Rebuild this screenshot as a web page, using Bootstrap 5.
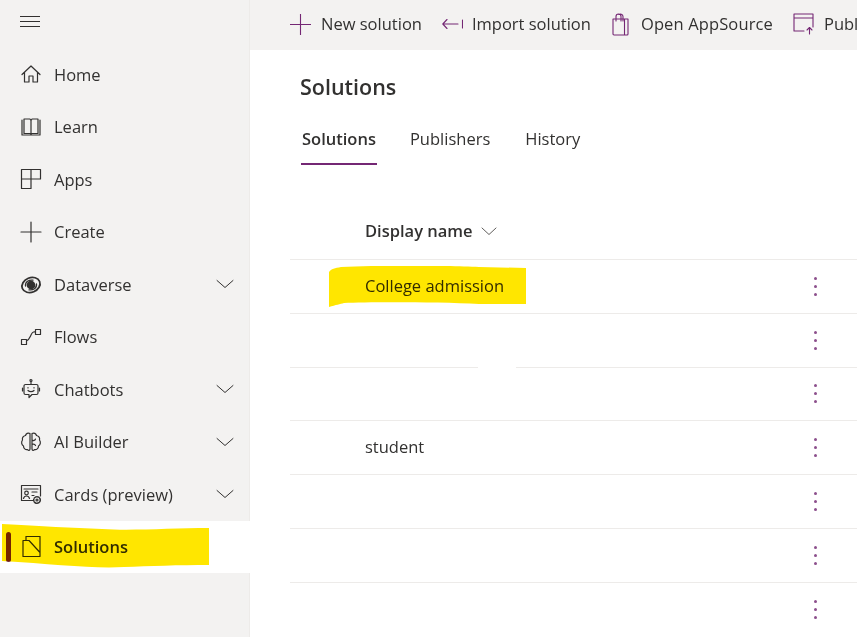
<!DOCTYPE html>
<html lang="en">
<head>
    <meta charset="UTF-8">
    <meta name="viewport" content="width=device-width, initial-scale=1.0">
    <title>Solutions</title>
    <link href="https://cdn.jsdelivr.net/npm/bootstrap@5.3.0/dist/css/bootstrap.min.css" rel="stylesheet">
    <style>
        html, body { height: 100%; overflow: hidden; }
        body { font-family: "Open Sans", "Liberation Sans", sans-serif; color: #323130; background: #fff; font-size: 16.5px; }
        svg { display: block; flex: none; fill: none; stroke-linecap: round; stroke-linejoin: round; }
        .app { height: 637px; }
        .sidebar { width: 250px; flex: none; background: #f3f2f1; border-right: 1px solid #edebe9; }
        .hamburger { height: 48px; padding: 15px 0 0 20px; }
        .side-item { height: 52.5px; padding: 2px 15px 0 20px; position: relative; }
        .side-item svg.icon { width: 22px; height: 22px; stroke: #323130; stroke-width: 1.2; margin: -2px 12px 0 0; }
        .side-item .chev { margin-left: auto; margin-top: -2px; }
        .side-item.active { background: #fff; margin-right: -1px; font-weight: 600; }
        .active-bar { position: absolute; left: 6px; top: 11px; width: 5px; height: 30px; border-radius: 3px; background: #742774; z-index: 2; }
        .marker { position: absolute; mix-blend-mode: multiply; z-index: 3; pointer-events: none; fill: #ffe600; stroke: none; }
        .commandbar { height: 50px; background: #f3f2f1; padding: 0 0 2px 40px; white-space: nowrap; overflow: hidden; }
        .cmd { margin-right: 20px; }
        .cmd svg { stroke: #742774; stroke-width: 1.1; margin-right: 10px; }
        .cmd-appsource { margin-left: 1px; letter-spacing: .13px; }
        .page-title { font-size: 21.5px; font-weight: 600; margin: 0; padding: 23px 0 0 50px; line-height: 27px; }
        .tabs { padding: 22px 0 0 51px; height: 90px; }
        .tabs .tab { padding: 0 2px; line-height: 34px; margin-right: 31px; }
        .tabs .tab.active { font-weight: 600; border-bottom: 2px solid #742774; height: 43px; padding: 0 1px; }
        .grid-head { margin-left: 40px; height: 70px; padding: 14px 0 0 75px; font-weight: 600; border-bottom: 1px solid #edebe9; }
        .grid-row { margin-left: 40px; height: 53.75px; padding-left: 75px; padding-right: 40.5px; border-bottom: 1px solid #edebe9; position: relative; }
        .dots { margin-left: auto; display: flex; flex-direction: column; gap: 5px; }
        .dots i { display: block; width: 3px; height: 3px; border-radius: 50%; background: #8c4f8c; }
        .erased { position: absolute; left: 188px; bottom: -1px; width: 38px; height: 1px; background: #fff; }
    </style>
</head>
<body>
<div class="app d-flex">
    <!-- left nav -->
    <nav class="sidebar">
        <div class="hamburger">
            <svg width="20" height="14" style="stroke:#323130;stroke-width:1"><path d="M0 1.500h20M0 6.500h20M0 11.500h20"/></svg>
        </div>
        <div class="side-item d-flex align-items-center">
            <svg class="icon" viewBox="0 0 22 22"><path d="M2 11.500 11 3l9 8.500M4.500 9.500V19h4.500v-6h4v6h4.500V9.500"/></svg>Home
        </div>
        <div class="side-item d-flex align-items-center">
            <svg class="icon" viewBox="0 0 22 22"><path d="M2 4v15h18V4M4 3h6l1 1.500V18l-1-.5H4zM18 3h-6l-1 1.500V18l1-.5h6z"/></svg>Learn
        </div>
        <div class="side-item d-flex align-items-center">
            <svg class="icon" viewBox="0 0 22 22"><path d="M1.500 1.500h19v9.500H11v9.500H1.500zM11 1.500V11H1.500"/></svg>Apps
        </div>
        <div class="side-item d-flex align-items-center">
            <svg class="icon" viewBox="0 0 22 22"><path d="M11 1v20M1 11h20"/></svg>Create
        </div>
        <div class="side-item d-flex align-items-center">
            <svg class="icon" viewBox="0 0 22 22"><ellipse cx="11" cy="12" rx="9.300" ry="7.300" transform="rotate(-22 11 12)" stroke-width="1.800"/><circle cx="11" cy="12" r="4.300" fill="#323130" stroke="none"/><path d="M5.500 13C5 9 9 6.500 13 7.200M16.500 11c.5 4-3.500 6.500-7.500 5.800" stroke-width="1.300"/></svg>Dataverse
            <svg class="chev" width="18" height="10" style="stroke:#323130;stroke-width:1"><path d="M1 1.500l8 7 8-7"/></svg>
        </div>
        <div class="side-item d-flex align-items-center">
            <svg class="icon" viewBox="0 0 22 22"><path d="M1.500 13.500h5v5h-5zM15.500 3.500h5v5h-5zM6.500 15c2.500-1 3-3 4.500-6s2-3 4.500-3.500"/></svg>Flows
        </div>
        <div class="side-item d-flex align-items-center">
            <svg class="icon" viewBox="0 0 22 22"><path d="M5.500 6.500h11a1.500 1.500 0 0 1 1.500 1.500v7a1.500 1.500 0 0 1-1.500 1.500H12l-3 3v-3H5.500A1.500 1.500 0 0 1 4 15V8a1.500 1.500 0 0 1 1.500-1.500zM11 6.500V3.500M2.500 10v3M19.500 10v3M8 12.500c1.500 1.500 4.500 1.500 6 0"/><circle cx="11" cy="2.500" r="1"/><path d="M8 9.500v.5M14 9.500v.5"/></svg>Chatbots
            <svg class="chev" width="18" height="10" style="stroke:#323130;stroke-width:1"><path d="M1 1.500l8 7 8-7"/></svg>
        </div>
        <div class="side-item d-flex align-items-center">
            <svg class="icon" viewBox="0 0 22 22"><path d="M10 2.500C8 1.500 6 2.500 5.500 4.500 3 5 2 7 2.500 9 1 11 1.500 14 3.500 15c0 2.500 2 4 4 3.500 1 1.500 2.500 1 2.500-.5zM12 2.500c2-1 4 0 4.500 2 2.500.5 3.500 2.500 3 4.500 1.500 2 1 5-1 6 0 2.500-2 4-4 3.500-1 1.500-2.500 1-2.500-.5zM12 9c1.500 1 3 .5 3.500-1M12 13.500c1.500-.5 3 0 3.500 1"/></svg>AI Builder
            <svg class="chev" width="18" height="10" style="stroke:#323130;stroke-width:1"><path d="M1 1.500l8 7 8-7"/></svg>
        </div>
        <div class="side-item d-flex align-items-center">
            <svg class="icon" viewBox="0 0 22 22"><path d="M13 17.500H1.500v-15h19V13M4 6h14"/><circle cx="6.500" cy="10" r="1.800"/><path d="M3.500 15.500c.5-2 1.500-2.500 3-2.500s2.500.5 3 2.500M12 9h5M12 12.500h2"/><circle cx="17" cy="17" r="3.300" stroke-width="1.500" stroke-dasharray="2 1"/><circle cx="17" cy="17" r="1"/></svg>Cards (preview)
            <svg class="chev" width="18" height="10" style="stroke:#323130;stroke-width:1"><path d="M1 1.500l8 7 8-7"/></svg>
        </div>
        <div class="side-item active d-flex align-items-center">
            <span class="active-bar"></span>
            <svg class="icon" viewBox="0 0 22 22"><path d="M6 4.500V.5H20V20M3 4.500H9L20 16.500M3 4.500V20.500H20"/></svg>Solutions
            <svg class="marker" style="left:2px;top:3px" width="207" height="45" viewBox="0 0 207 45"><path d="M0 0C40 2 70 4 100 5c30 2 70-1 107-1v37c-30 0-60 1-85 2-30 2-70-3-122-6z"/></svg>
        </div>
    </nav>

    <!-- main area -->
    <main class="flex-grow-1 overflow-hidden">
        <div class="commandbar d-flex align-items-center">
            <div class="cmd d-flex align-items-center">
                <svg width="21" height="21" viewBox="0 0 21 21"><path d="M10.500 0v21M0 10.500h21"/></svg>New solution
            </div>
            <div class="cmd d-flex align-items-center">
                <svg width="21" height="12" viewBox="0 0 21 12" style="margin-right:9px"><path d="M5 1.500.8 6 5 10.500M1 6h15M20.500 2v8"/></svg>Import solution
            </div>
            <div class="cmd cmd-appsource d-flex align-items-center">
                <svg width="17" height="23" viewBox="0 0 17 23" style="margin-right:12px"><path d="M1 6h11.500v16H2a1 1 0 0 1-1-1zM12.500 6H16v15a1 1 0 0 1-1 1h-2.500M4 8V3.500a2.500 2.500 0 0 1 5 0V8M7 1.500c1-1 4-.5 4 2V8"/></svg>Open AppSource
            </div>
            <div class="cmd d-flex align-items-center">
                <svg width="21" height="22" viewBox="0 0 21 22"><path d="M11 18H1V1h19v13M1 5h19M16.500 21v-6M14 17l2.500-2.500L19 17"/></svg>Publ
            </div>
        </div>

        <h1 class="page-title">Solutions</h1>
        <div class="tabs d-flex align-items-start">
            <div class="tab active">Solutions</div>
            <div class="tab">Publishers</div>
            <div class="tab">History</div>
        </div>

        <div class="grid-head d-flex align-items-center">
            Display name
            <svg class="ms-2" width="16" height="9" style="stroke:#605e5c;stroke-width:1"><path d="M1 1l7 6.500L15 1"/></svg>
        </div>
        <div class="grid-row d-flex align-items-center">
            <svg class="marker" style="left:39px;top:6px" width="197" height="43" viewBox="0 0 197 43"><path d="M12 1C50-1 120-.500 150 1l47 1v36H150c-40-2-110-2-135-1-4 1-8 2-15 4V6c2-3 6-4 12-5z"/></svg>
            College admission
            <div class="dots"><i></i><i></i><i></i></div>
        </div>
        <div class="grid-row d-flex align-items-center">
            <span class="erased"></span>
            <div class="dots"><i></i><i></i><i></i></div>
        </div>
        <div class="grid-row d-flex align-items-center">
            <div class="dots"><i></i><i></i><i></i></div>
        </div>
        <div class="grid-row d-flex align-items-center">
            student
            <div class="dots"><i></i><i></i><i></i></div>
        </div>
        <div class="grid-row d-flex align-items-center">
            <div class="dots"><i></i><i></i><i></i></div>
        </div>
        <div class="grid-row d-flex align-items-center">
            <div class="dots"><i></i><i></i><i></i></div>
        </div>
        <div class="grid-row d-flex align-items-center" style="border-bottom:0">
            <div class="dots"><i></i><i></i><i></i></div>
        </div>
    </main>
</div>
<script src="https://cdn.jsdelivr.net/npm/bootstrap@5.3.0/dist/js/bootstrap.bundle.min.js"></script>
</body>
</html>
